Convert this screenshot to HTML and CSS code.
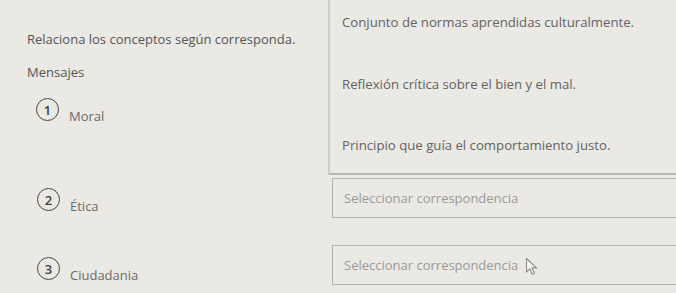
FILE: index.html
```html
<!DOCTYPE html>
<html lang="es">
<head>
<meta charset="utf-8">
<title>Relaciona los conceptos</title>
<link rel="stylesheet" href="styles.css">
</head>
<body>
<div class="page">
  <div class="left">
    <div class="title">Relaciona los conceptos según corresponda.</div>
    <div class="subtitle">Mensajes</div>
    <div class="item item-1"><span class="num">1</span><span class="label">Moral</span></div>
    <div class="item item-2"><span class="num">2</span><span class="label">Ética</span></div>
    <div class="item item-3"><span class="num">3</span><span class="label">Ciudadania</span></div>
  </div>
  <div class="right">
    <div class="panel">
      <div class="def def-1">Conjunto de normas aprendidas culturalmente.</div>
      <div class="def def-2">Reflexión crítica sobre el bien y el mal.</div>
      <div class="def def-3">Principio que guía el comportamiento justo.</div>
    </div>
    <div class="select select-1">Seleccionar correspondencia</div>
    <div class="select select-2">Seleccionar correspondencia<svg class="cursor" width="14" height="19" viewBox="0 0 14 19"><path d="M1.5 1.5 L1.5 15 L4.8 11.8 L7.2 17.3 L9.4 16.3 L7 10.9 L11.6 10.9 Z" fill="#f4f3f0" stroke="#8a8a8a" stroke-width="1.1" stroke-linejoin="round"/></svg></div>
  </div>
</div>
</body>
</html>
```

FILE: styles.css
```css
html, body {
  margin: 0;
  padding: 0;
  background: #ebe9e4;
  width: 676px;
  height: 293px;
  overflow: hidden;
}
body {
  font-family: "Open Sans", "Liberation Sans", sans-serif;
  font-size: 13px;
  line-height: 18px;
  color: #666;
}
.page {
  display: flex;
  height: 293px;
}
.left {
  width: 328px;
  padding-left: 27px;
  box-sizing: border-box;
  display: flex;
  flex-direction: column;
}
.title {
  margin-top: 30px;
  color: #555;
}
.subtitle {
  margin-top: 15px;
  color: #555;
}
.item {
  display: flex;
  align-items: flex-start;
  height: 27px;
}
.item-1 { margin-top: 17px; }
.item-2 { margin-top: 63px; }
.item-3 { margin-top: 42px; }
.num {
  width: 23px;
  height: 23px;
  margin-left: 9px;
  border: 1.6px solid #444;
  border-radius: 50%;
  box-sizing: border-box;
  display: flex;
  align-items: center;
  justify-content: center;
  font-size: 13px;
  font-weight: 600;
  color: #3e3e3e;
  flex: none;
}
.item-2 .num, .item-3 .num { margin-left: 10px; }
.label {
  margin-left: 10px;
  margin-top: 9px;
  color: #6a6a6a;
}
.right {
  flex: 1;
  display: flex;
  flex-direction: column;
}
.panel {
  height: 175px;
  box-sizing: border-box;
  border-left: 2px solid #cfcdc8;
  border-bottom: 2px solid #b8b7b3;
  padding-left: 12px;
  display: flex;
  flex-direction: column;
  font-size: 13.2px;
}
.def { color: #636363; }
.def-1 { margin-top: 13px; }
.def-2 { margin-top: 44px; }
.def-3 { margin-top: 43px; }
.select {
  margin-left: 4px;
  height: 40px;
  box-sizing: border-box;
  border: 1px solid #b2b1ad;
  border-right: none;
  padding-left: 11px;
  display: flex;
  align-items: center;
  color: #999;
}
.select-1 { margin-top: 3px; }
.select-2 { margin-top: 27px; }
.cursor {
  margin-left: 7px;
  margin-top: 2px;
}
```
